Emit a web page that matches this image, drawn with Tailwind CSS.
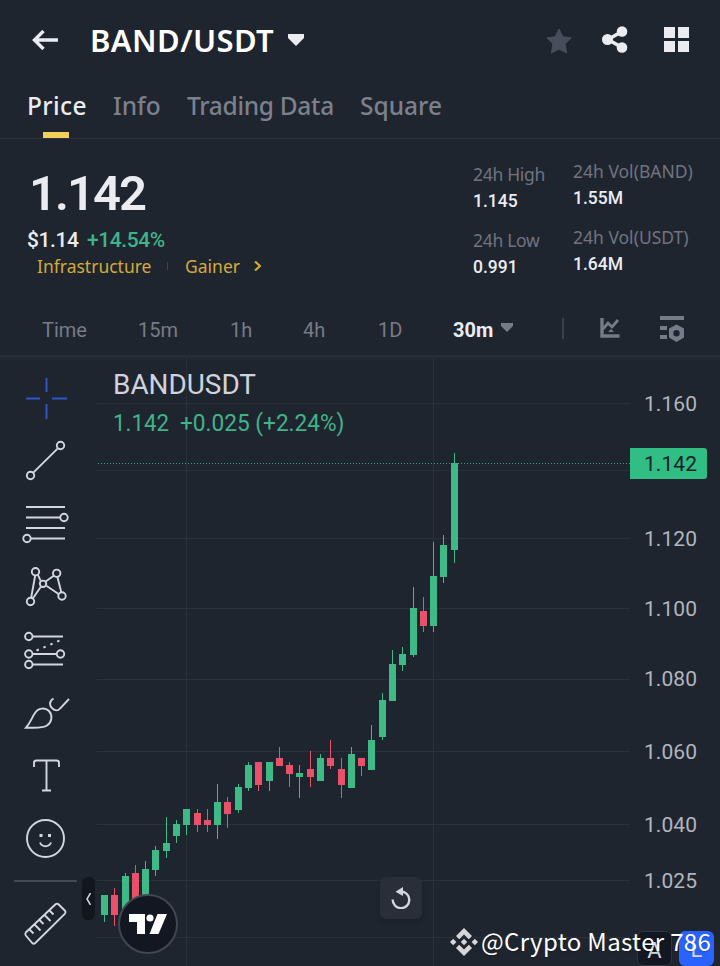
<!DOCTYPE html>
<html lang="en">

<head>
    <meta charset="UTF-8">
    <meta name="viewport" content="width=device-width, initial-scale=1.0">
    <title>BAND/USDT</title>
    <script src="https://cdn.jsdelivr.net/npm/@tailwindcss/browser@4"></script>
</head>

<body class="w-[720px] h-[966px] overflow-hidden bg-[#1f252f] font-['Noto_Sans',sans-serif] text-[#eaecf2]">

    <!-- Header -->
    <header class="flex items-center h-20 pl-8 pr-[31px] pb-px">
        <svg class="w-[26px] h-5" viewBox="0 0 26 20" fill="none" stroke="#eaecf2" stroke-width="3.4">
            <path d="M26 10H2.500M11.500 1L2.500 10l9 9" />
        </svg>
        <h1 class="ml-8 w-[198px] pt-0.5 text-[31px] leading-none font-semibold text-white whitespace-nowrap tracking-[0.4px]">BAND/USDT</h1>
        <svg class="w-4 h-3" viewBox="0 0 16 12" fill="#eaecf2">
            <path d="M0 0h16v4l-8 8-8-8z" />
        </svg>
        <div class="ml-auto flex items-center">
            <svg class="w-[26px] h-[26px] mt-0.5" viewBox="0 0 26 26" fill="#474d5b" stroke="#474d5b" stroke-linejoin="round">
                <path d="M13 1l3.800 7.700 8.400 1.200-6.100 5.900L20.600 25 13 21 5.400 25l1.500-9.200L.8 9.900l8.400-1.200z" />
            </svg>
            <svg class="w-[26px] h-[27px] ml-[30px]" viewBox="0 0 26 27" fill="#eaecf2">
                <path d="M20 5.500L6 13.500l14 8" fill="none" stroke="#eaecf2" stroke-width="3.600" />
                <circle cx="20" cy="5.500" r="5.300" />
                <circle cx="5.500" cy="13.500" r="5.500" />
                <circle cx="20" cy="21.500" r="5.300" />
            </svg>
            <div class="grid grid-cols-2 gap-[3px] ml-[36px] w-[25px] h-[25px]">
                <span class="bg-[#eaecf2]"></span>
                <span class="bg-[#eaecf2]"></span>
                <span class="bg-[#eaecf2]"></span>
                <span class="bg-[#eaecf2]"></span>
            </div>
        </div>
    </header>

    <!-- Tabs -->
    <nav class="flex h-[59px] pl-[27px] pt-[14px] border-b border-[#2d333e] text-[24.5px] leading-6 font-medium text-[#7b808c] whitespace-nowrap">
        <a class="w-[86px] text-[#eaecf2]" href="#"><span class="tracking-[0.4px]">Price</span>
            <span class="block w-[26px] h-1.5 mt-3.5 ml-4 bg-[#f0cf5c]"></span>
        </a>
        <a class="w-[74px]" href="#">Info</a>
        <a class="w-[173px] tracking-[-0.3px]" href="#">Trading Data</a>
        <a href="#">Square</a>
    </nav>

    <!-- Ticker -->
    <section class="flex h-[165px] pl-[27px] whitespace-nowrap">
        <div class="w-[446px] pt-[30px]">
            <p class="pl-0.5 font-[Roboto,sans-serif] text-[49px] leading-[50px] font-semibold tracking-[-2px]">1.142</p>
            <p class="flex pt-[9px] font-[Roboto,sans-serif] text-[21px] leading-6 font-medium">
                <span class="w-[60px] tracking-[-0.4px]">$1.14</span>
                <span class="text-[#3eb489] tracking-[-0.4px]">+14.54%</span>
            </p>
            <p class="flex items-center pl-2.5 pt-0.5 text-[17.5px] leading-6 text-[#d2aa3c]">
                <span class="w-[130px]">Infrastructure</span>
                <span class="w-px h-2 bg-[#3c424e]"></span>
                <span class="ml-[17px] w-[69px]">Gainer</span>
                <svg class="w-[7px] h-[10px]" viewBox="0 0 7 10" fill="none" stroke="#d2aa3c" stroke-width="2.2">
                    <path d="M1 .500L6 5 1 9.500" />
                </svg>
            </p>
        </div>
        <dl class="w-[100px] pt-[22px] text-[17.5px] leading-[26px]">
            <dt class="text-[#6f7480] tracking-[-0.3px]">24h High</dt>
            <dd class="relative top-px font-[Roboto,sans-serif] font-medium mb-[14px]">1.145</dd>
            <dt class="text-[#6f7480] tracking-[-0.3px]">24h Low</dt>
            <dd class="relative top-px font-[Roboto,sans-serif] font-medium">0.991</dd>
        </dl>
        <dl class="pt-[19px] text-[17.5px] leading-[26px]">
            <dt class="text-[#6f7480]">24h Vol(BAND)</dt>
            <dd class="relative top-px font-[Roboto,sans-serif] font-medium mb-[14px]">1.55M</dd>
            <dt class="text-[#6f7480]">24h Vol(USDT)</dt>
            <dd class="relative top-px font-[Roboto,sans-serif] font-medium">1.64M</dd>
        </dl>
    </section>

    <!-- Intervals -->
    <nav class="flex items-center h-[54px] pl-[42px] border-b-[3px] border-[#262c36] font-[Roboto,sans-serif] text-[20px] text-[#767b87] whitespace-nowrap">
        <span class="w-[96px]">Time</span>
        <span class="w-[92px]">15m</span>
        <span class="w-[73px]">1h</span>
        <span class="w-[75px]">4h</span>
        <span class="w-[75px]">1D</span>
        <span class="w-[48px] font-bold text-[#eaecf2]">30m</span>
        <svg class="w-3 h-[9px] -mt-1" viewBox="0 0 12 9" fill="#767b87">
            <path d="M0 0h12v3L6 9 0 3z" />
        </svg>
        <span class="ml-[49px] w-0.5 h-[21px] -mt-0.5 bg-[#3a404b]"></span>
        <svg class="ml-[36px] w-5 h-5 -mt-1" viewBox="0 0 20 20" fill="none" stroke="#767b87" stroke-width="3.400">
            <path d="M2 0v18h17.500" />
            <path d="M3 11l5-6 4 4 6-7" stroke-width="2.800" />
            <path d="M8 14l3-3 3 3z" fill="#767b87" stroke="none" />
        </svg>
        <svg class="ml-[39px] w-[26px] h-[26px] -mt-0.5" viewBox="0 0 26 26" fill="#767b87">
            <path d="M1 0h24v4H1zM1 10h7v4H1zM1 19h7v4H1z" />
            <path fill-rule="evenodd" d="M17.500 8.500l7.500 4v9L17.500 26 10 21.500v-9zM17.500 14a3.200 3.200 0 100 6.400 3.200 3.200 0 000-6.400z" />
        </svg>
    </nav>

    <!-- Chart -->
    <main class="relative flex h-[608px]">
        <!-- Drawing tools -->
        <aside class="w-[97px] shrink-0">
            <svg class="w-full h-full" viewBox="0 358 97 608" fill="none" stroke="#d3d6de" stroke-width="1.900">
                <!-- crosshair -->
                <path d="M26 398.500h14M52 398.500h15M46.500 378v14M46.500 404v15" stroke="#3157c6" />
                <!-- trend line -->
                <path d="M33.300 472.700L57.800 448.300" />
                <circle cx="30.500" cy="475.500" r="3.700" />
                <circle cx="60.500" cy="445.500" r="3.700" />
                <!-- fib levels -->
                <path d="M26 507h39M26 517.500h34M26 528h39M31 538.500h34" />
                <circle cx="64" cy="517.500" r="3.700" />
                <circle cx="27" cy="538.500" r="3.700" />
                <!-- pattern -->
                <path d="M31.200 597.500L35.200 575.500M38 575.200L40.600 580.600M45.700 581.400L53.700 575.700M57.500 577.200L61.300 592.200M46.400 585.800L58.600 594M40.800 586.800L33 598.200" />
                <circle cx="30.500" cy="601.500" r="3.700" />
                <circle cx="35.500" cy="571.700" r="3.700" />
                <circle cx="43" cy="583.800" r="3.200" />
                <circle cx="56.700" cy="573.300" r="3.700" />
                <circle cx="62" cy="596" r="3.700" />
                <!-- position -->
                <path d="M33 636.500h30M33 654h23M33 664.500h30" />
                <path d="M36.500 650.500L61 640" stroke-width="2" stroke-dasharray="2.500 5" />
                <circle cx="28.800" cy="636.500" r="3.700" />
                <circle cx="28.800" cy="654" r="3.700" />
                <circle cx="60.500" cy="654" r="3.700" />
                <circle cx="28.800" cy="664.500" r="3.700" />
                <!-- brush -->
                <path d="M26 727.700C31 722 32 717 35 713C38 708 45 707 49 711C53 715.500 52 722 47 725.500C43 728.500 36 727.700 26 727.700z" />
                <path d="M53.500 698.500C48.500 701.500 49.500 706 52.500 708.500C55 711 58 711 60 708.500L69 699" />
                <!-- text -->
                <path d="M34 767v-4q0-2.500 2.500-2.500h20q2.500 0 2.500 2.500v4M46.500 760.500v30M42 790.500h9" />
                <!-- emoji -->
                <circle cx="45.500" cy="838.500" r="18.500" />
                <path d="M40 842.500c2 5 9 5 11 0" />
                <path d="M39.500 835.500h3M48 835.500h3" stroke-width="3" />
                <path d="M14 881h63" stroke="#434955" stroke-width="2" />
                <!-- ruler -->
                <path d="M25.800 935.500q-1.200-1.500 0-3L55.500 904.300q1.500-1.300 3 0L65 910.700q1.200 1.500 0 3L35.300 943q-1.500 1.300-3 0zM29.500 929.500l4 4M34.500 924.500l6 6M39.500 920l4 4M44.500 915l6 6M49.500 910.500l4 4" />
            </svg>
        </aside>

        <!-- Candles and price scale -->
        <svg class="w-[623px] h-full" viewBox="97 358 623 608" font-family="Roboto, sans-serif">
            <path d="M97 403.500h533M97 470.500h533M97 538.500h533M97 608.500h533M97 679.500h533M97 751.500h533M97 824.500h533M97 880.500h533M97 937.500h533M186.500 358v608M433.500 358v608" stroke="#2a303a" />
            <path d="M98 463.500h532" stroke="#3fa08a" stroke-dasharray="1 2" />
            <g id="candles" shape-rendering="crispEdges"></g>
            <text x="113" y="393.500" font-size="28" fill="#d0d3dc" textLength="143" lengthAdjust="spacingAndGlyphs">BANDUSDT</text>
            <g font-size="23" fill="#41b388">
                <text x="113" y="430.500" textLength="56" lengthAdjust="spacingAndGlyphs">1.142</text>
                <text x="180" y="430.500" textLength="164.500" lengthAdjust="spacingAndGlyphs">+0.025 (+2.24%)</text>
            </g>
            <g font-size="21" fill="#b2b5be">
                <text x="644" y="411" textLength="53">1.160</text>
                <text x="644" y="546" textLength="53">1.120</text>
                <text x="644" y="616" textLength="53">1.100</text>
                <text x="644" y="686" textLength="53">1.080</text>
                <text x="644" y="759" textLength="53">1.060</text>
                <text x="644" y="832" textLength="53">1.040</text>
                <text x="644" y="888" textLength="53">1.025</text>
            </g>
            <path d="M630 448h74q3 0 3 3v25q0 3-3 3h-74z" fill="#30be85" />
            <text x="644" y="471" font-size="21" fill="#16212b" textLength="53">1.142</text>
        </svg>

        <!-- Toolbar collapse handle -->
        <button class="absolute left-[82px] top-[519px] w-[13px] h-[43px] rounded-md bg-[#12161f] flex items-center justify-center">
            <svg class="w-[5px] h-3" viewBox="0 0 5 12" fill="none" stroke="#d3d6de" stroke-width="1.500">
                <path d="M4.500 0L1 6l3.500 6" />
            </svg>
        </button>

        <!-- TradingView badge -->
        <div class="absolute left-[118px] top-[536px] w-[60px] h-[60px] rounded-full border-2 border-[#434651] bg-[#131722] flex items-center justify-center">
            <svg class="w-[38px] h-5" viewBox="0 0 38 20" fill="#fff">
                <path d="M0 0h16v20H8V8H0z" />
                <circle cx="21" cy="4" r="3.600" />
                <path d="M28.500 0H38l-8.500 20H20.500z" />
            </svg>
        </div>

        <!-- Reset view -->
        <button class="absolute left-[380px] top-[519px] w-[42px] h-[42px] rounded-md bg-[#2a2e39] shadow-md flex items-center justify-center">
            <svg class="w-5 h-[22px]" viewBox="0 0 20 22" fill="none" stroke="#d3d6de" stroke-width="2.400">
                <path d="M1.700 12.500A8.300 8.300 0 1 0 10 4.500H7" />
                <path d="M4.500 4.700L12 0v9z" fill="#d3d6de" stroke="none" />
            </svg>
        </button>

        <!-- Scale mode buttons -->
        <div class="absolute left-[637px] top-[573px] flex gap-[7px] font-[Roboto,sans-serif] text-[22px] leading-[37px] text-center text-[#d3d6de]">
            <span class="w-[35px] h-[35px] rounded-md border border-[#2f3541] bg-[#131722]">A</span>
            <span class="w-[35px] h-[35px] rounded-md bg-[#2962ff]">L</span>
        </div>

        <!-- Author tag -->
        <div class="absolute left-[450px] top-[568px] flex items-center h-8 text-white whitespace-nowrap">
            <svg class="w-7 h-7" viewBox="0 0 28 28" fill="#d6d7da">
                <path d="M14 0l8 8-3.200 3.200L14 6.400l-4.800 4.800L6 8zM14 28l8-8-3.200-3.200-4.800 4.800-4.800-4.800L6 20zM3.200 10.800L6.400 14l-3.200 3.200L0 14zM24.800 10.800L28 14l-3.200 3.200-3.200-3.200zM14 10.800l3.200 3.200-3.200 3.200-3.200-3.200z" />
            </svg>
            <span class="relative -top-px ml-[3px] font-['Noto_Sans_CJK_SC',sans-serif] text-[24px] leading-8 font-normal tracking-[0.35px] text-shadow-sm">@Crypto Master 786</span>
        </div>
    </main>

    <script>
        // x, high, body top, body bottom, low, direction
        const candles = [
            [101, 895, 895, 915, 922, 'up'],
            [111, 888, 895, 915, 926, 'down'],
            [122, 873, 876, 912, 915, 'up'],
            [132, 865, 873, 905, 910, 'down'],
            [142, 861, 869, 900, 905, 'up'],
            [152, 846, 850, 870, 876, 'up'],
            [163, 817, 843, 851, 858, 'up'],
            [173, 820, 824, 836, 843, 'up'],
            [183, 809, 809, 825, 835, 'up'],
            [194, 809, 813, 825, 832, 'down'],
            [204, 809, 820, 825, 832, 'down'],
            [214, 784, 802, 825, 839, 'up'],
            [224, 797, 802, 814, 828, 'down'],
            [235, 784, 787, 810, 813, 'up'],
            [245, 762, 765, 788, 791, 'up'],
            [255, 762, 762, 785, 791, 'down'],
            [266, 762, 762, 781, 791, 'up'],
            [276, 747, 758, 766, 766, 'down'],
            [286, 762, 765, 774, 787, 'down'],
            [296, 765, 773, 777, 798, 'up'],
            [307, 751, 769, 777, 787, 'down'],
            [317, 754, 758, 781, 781, 'up'],
            [327, 740, 758, 766, 769, 'down'],
            [338, 758, 769, 785, 798, 'down'],
            [348, 747, 754, 788, 788, 'up'],
            [358, 758, 758, 766, 776, 'down'],
            [368, 725, 740, 770, 770, 'up'],
            [379, 693, 700, 737, 740, 'up'],
            [389, 650, 664, 701, 701, 'up'],
            [399, 647, 654, 665, 671, 'up'],
            [410, 587, 608, 655, 657, 'up'],
            [420, 597, 611, 626, 632, 'down'],
            [430, 542, 576, 626, 632, 'up'],
            [440, 535, 545, 577, 583, 'up'],
            [451, 453, 463, 550, 563, 'up']
        ];

        function addRect(x, y, width, height, fill) {
            const rect = document.createElementNS('http://www.w3.org/2000/svg', 'rect');
            rect.setAttribute('x', x);
            rect.setAttribute('y', y);
            rect.setAttribute('width', width);
            rect.setAttribute('height', height);
            rect.setAttribute('fill', fill);
            document.getElementById('candles').appendChild(rect);
        }

        candles.forEach(function ([x, high, top, bottom, low, dir]) {
            const color = dir === 'up' ? '#3dba86' : '#e9506a';
            addRect(x + 3, high, 1, low - high, color);
            addRect(x, top, 7, bottom - top, color);
        });
    </script>

</body>

</html>
